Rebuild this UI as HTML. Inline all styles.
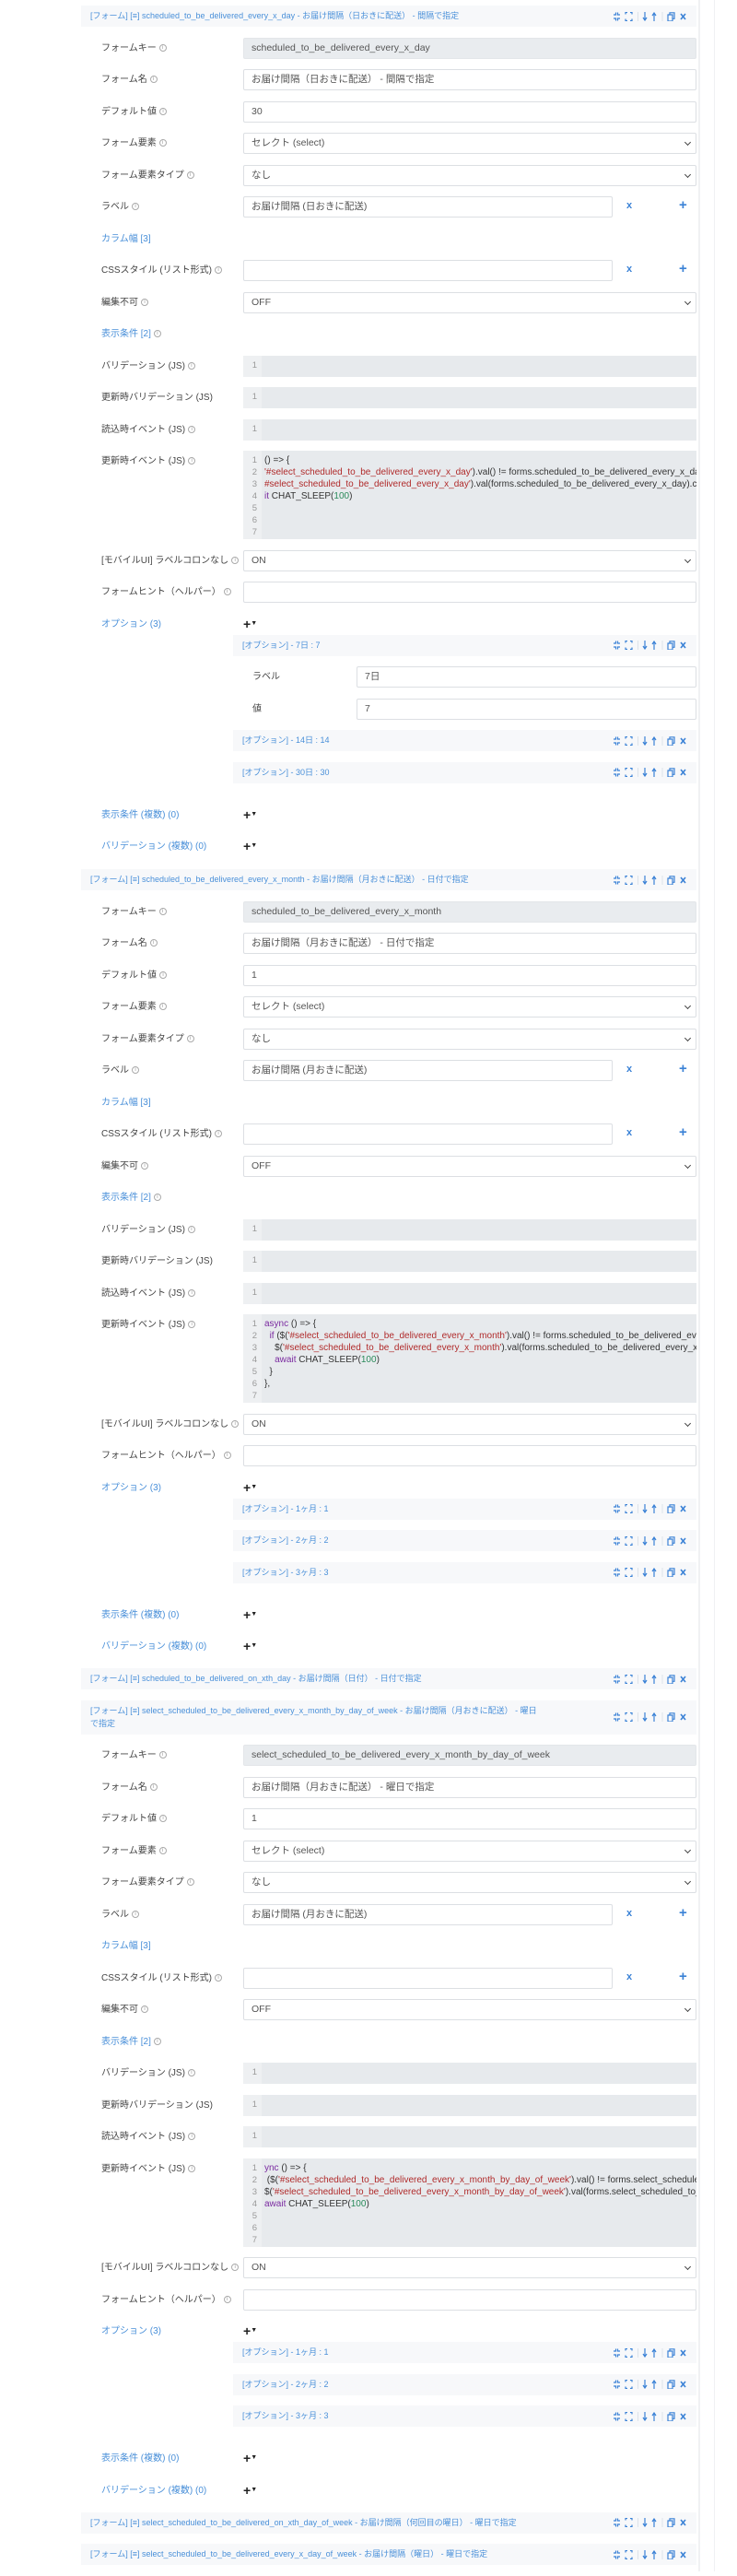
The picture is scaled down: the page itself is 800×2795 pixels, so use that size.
<!DOCTYPE html>
<html><head><meta charset="utf-8">
<style>
*{box-sizing:border-box;margin:0;padding:0}
body{width:800px;height:2790px;background:#fff;font-family:"Liberation Sans","Noto Sans CJK JP",sans-serif;position:relative;overflow:hidden}
.vl1{position:absolute;left:758px;top:0;width:2px;height:2790px;background:#f0f1f3}
.vl2{position:absolute;left:775px;top:0;width:1px;height:2790px;background:#f0f1f3}
#wrap{position:absolute;left:88px;top:6px;width:668px}
.hd{height:23px;background:#f7f8fa;margin-bottom:11.5px;position:relative;color:#4a90d9;font-size:9px;padding-left:10px;line-height:23px;white-space:nowrap}
.hd.two{height:37px;line-height:14px;padding-top:4px;white-space:normal;padding-right:170px}
.ic{position:absolute;right:10px;top:0;height:23px;display:flex;align-items:center;gap:0}
.hd.two .ic{top:7px}
.ic svg{display:block}
.row{height:23px;margin-bottom:11.5px;position:relative}
.lb{position:absolute;left:22px;top:0;line-height:23px;font-size:10px;color:#444;white-space:nowrap}
.lk{color:#4a90d9}
.i{display:inline-block;width:8px;height:8px;border:1px solid #aaa;border-radius:50%;margin-left:3px;vertical-align:middle;font-size:6px;line-height:6px;text-align:center;color:#999}
.in{position:absolute;left:176px;right:0;top:0;height:23px;border:1px solid #dcdfe3;border-radius:2px;padding-left:8px;font-size:10.5px;line-height:21px;color:#555;background:#fff;white-space:nowrap;overflow:hidden}
.in.dis{background:#e9ecef;border-color:#e3e6e9}
.in.sh{right:91px}
.sel::after{content:"";position:absolute;right:6px;top:7px;width:4px;height:4px;border-right:1.5px solid #444;border-bottom:1.5px solid #444;transform:rotate(45deg)}
.x{position:absolute;left:592px;top:4px;color:#3b82d6;font-weight:bold;font-size:11px}
.p{position:absolute;left:649px;top:1px;color:#3b82d6;font-weight:bold;font-size:15px}
.cd{position:absolute;left:176px;right:0;top:0;bottom:0;background:#e7eaed;overflow:hidden}
.gt{position:absolute;left:0;top:0;bottom:0;width:20px;background:#eef0f2;color:#999;font-size:9.5px;text-align:right;padding-right:5px;padding-top:4px;line-height:13px}
.ct{position:absolute;left:23px;top:4px;font-size:10px;line-height:13px;color:#333;white-space:pre}
.k{color:#7a2aa0}.s{color:#b02a2a}.n{color:#2a8a5a}
.pl{position:absolute;left:176px;top:3px;font-size:14px;font-weight:bold;color:#222}
.pl small{font-size:7px;vertical-align:4px}
.ob{margin-left:165px}
.ob .lb{left:21px}
.ob .in{left:134px}
</style></head><body>
<div class="vl1"></div><div class="vl2"></div>
<div id="wrap">

<!-- SECTION 1 -->
<div class="hd">[フォーム] [≡] scheduled_to_be_delivered_every_x_day - お届け間隔（日おきに配送） - 間隔で指定<div class="ic">ICONS</div></div>
<div class="row"><div class="lb">フォームキー<span class="i">i</span></div><div class="in dis">scheduled_to_be_delivered_every_x_day</div></div>
<div class="row"><div class="lb">フォーム名<span class="i">i</span></div><div class="in">お届け間隔（日おきに配送） - 間隔で指定</div></div>
<div class="row"><div class="lb">デフォルト値<span class="i">i</span></div><div class="in">30</div></div>
<div class="row"><div class="lb">フォーム要素<span class="i">i</span></div><div class="in sel">セレクト (select)</div></div>
<div class="row"><div class="lb">フォーム要素タイプ<span class="i">i</span></div><div class="in sel">なし</div></div>
<div class="row"><div class="lb">ラベル<span class="i">i</span></div><div class="in sh">お届け間隔 (日おきに配送)</div><span class="x">x</span><span class="p">+</span></div>
<div class="row"><div class="lb lk">カラム幅 [3]</div></div>
<div class="row"><div class="lb">CSSスタイル (リスト形式)<span class="i">i</span></div><div class="in sh"></div><span class="x">x</span><span class="p">+</span></div>
<div class="row"><div class="lb">編集不可<span class="i">i</span></div><div class="in sel">OFF</div></div>
<div class="row"><div class="lb lk">表示条件 [2]<span class="i">i</span></div></div>
<div class="row"><div class="lb">バリデーション (JS)<span class="i">i</span></div><div class="cd"><div class="gt">1</div></div></div>
<div class="row"><div class="lb">更新時バリデーション (JS)</div><div class="cd"><div class="gt">1</div></div></div>
<div class="row"><div class="lb">読込時イベント (JS)<span class="i">i</span></div><div class="cd"><div class="gt">1</div></div></div>
<div class="row" style="height:96px"><div class="lb">更新時イベント (JS)<span class="i">i</span></div><div class="cd"><div class="gt">1<br>2<br>3<br>4<br>5<br>6<br>7</div><div class="ct" style="left:23px">() =&gt; {
<span class="s">'#select_scheduled_to_be_delivered_every_x_day'</span>).val() != forms.scheduled_to_be_delivered_every_x_day) {
<span class="s">#select_scheduled_to_be_delivered_every_x_day'</span>).val(forms.scheduled_to_be_delivered_every_x_day).change
<span class="k">it</span> CHAT_SLEEP(<span class="n">100</span>)</div></div></div>
<div class="row"><div class="lb">[モバイルUI] ラベルコロンなし<span class="i">i</span></div><div class="in sel">ON</div></div>
<div class="row"><div class="lb">フォームヒント（ヘルパー）<span class="i">i</span></div><div class="in"></div></div>
<div class="row" style="margin-bottom:0"><div class="lb lk">オプション (3)</div><div class="pl">+<small>▼</small></div></div>
<div class="ob">
<div class="hd">[オプション] - 7日 : 7<div class="ic">ICONS</div></div>
<div class="row"><div class="lb">ラベル</div><div class="in">7日</div></div>
<div class="row"><div class="lb">値</div><div class="in">7</div></div>
<div class="hd">[オプション] - 14日 : 14<div class="ic">ICONS</div></div>
<div class="hd" style="margin-bottom:23px">[オプション] - 30日 : 30<div class="ic">ICONS</div></div>
</div>
<div class="row"><div class="lb lk">表示条件 (複数) (0)</div><div class="pl">+<small>▼</small></div></div>
<div class="row" style="margin-bottom:13px"><div class="lb lk">バリデーション (複数) (0)</div><div class="pl">+<small>▼</small></div></div>

<!-- SECTION 2 -->
<div class="hd">[フォーム] [≡] scheduled_to_be_delivered_every_x_month - お届け間隔（月おきに配送） - 日付で指定<div class="ic">ICONS</div></div>
<div class="row"><div class="lb">フォームキー<span class="i">i</span></div><div class="in dis">scheduled_to_be_delivered_every_x_month</div></div>
<div class="row"><div class="lb">フォーム名<span class="i">i</span></div><div class="in">お届け間隔（月おきに配送） - 日付で指定</div></div>
<div class="row"><div class="lb">デフォルト値<span class="i">i</span></div><div class="in">1</div></div>
<div class="row"><div class="lb">フォーム要素<span class="i">i</span></div><div class="in sel">セレクト (select)</div></div>
<div class="row"><div class="lb">フォーム要素タイプ<span class="i">i</span></div><div class="in sel">なし</div></div>
<div class="row"><div class="lb">ラベル<span class="i">i</span></div><div class="in sh">お届け間隔 (月おきに配送)</div><span class="x">x</span><span class="p">+</span></div>
<div class="row"><div class="lb lk">カラム幅 [3]</div></div>
<div class="row"><div class="lb">CSSスタイル (リスト形式)<span class="i">i</span></div><div class="in sh"></div><span class="x">x</span><span class="p">+</span></div>
<div class="row"><div class="lb">編集不可<span class="i">i</span></div><div class="in sel">OFF</div></div>
<div class="row"><div class="lb lk">表示条件 [2]<span class="i">i</span></div></div>
<div class="row"><div class="lb">バリデーション (JS)<span class="i">i</span></div><div class="cd"><div class="gt">1</div></div></div>
<div class="row"><div class="lb">更新時バリデーション (JS)</div><div class="cd"><div class="gt">1</div></div></div>
<div class="row"><div class="lb">読込時イベント (JS)<span class="i">i</span></div><div class="cd"><div class="gt">1</div></div></div>
<div class="row" style="height:96px"><div class="lb">更新時イベント (JS)<span class="i">i</span></div><div class="cd"><div class="gt">1<br>2<br>3<br>4<br>5<br>6<br>7</div><div class="ct"><span class="k">async</span> () =&gt; {
  <span class="k">if</span> ($(<span class="s">'#select_scheduled_to_be_delivered_every_x_month'</span>).val() != forms.scheduled_to_be_delivered_every_x_month) {
    $(<span class="s">'#select_scheduled_to_be_delivered_every_x_month'</span>).val(forms.scheduled_to_be_delivered_every_x_month).change()
    <span class="k">await</span> CHAT_SLEEP(<span class="n">100</span>)
  }
},</div></div></div>
<div class="row"><div class="lb">[モバイルUI] ラベルコロンなし<span class="i">i</span></div><div class="in sel">ON</div></div>
<div class="row"><div class="lb">フォームヒント（ヘルパー）<span class="i">i</span></div><div class="in"></div></div>
<div class="row" style="margin-bottom:0"><div class="lb lk">オプション (3)</div><div class="pl">+<small>▼</small></div></div>
<div class="ob">
<div class="hd">[オプション] - 1ヶ月 : 1<div class="ic">ICONS</div></div>
<div class="hd">[オプション] - 2ヶ月 : 2<div class="ic">ICONS</div></div>
<div class="hd" style="margin-bottom:23px">[オプション] - 3ヶ月 : 3<div class="ic">ICONS</div></div>
</div>
<div class="row"><div class="lb lk">表示条件 (複数) (0)</div><div class="pl">+<small>▼</small></div></div>
<div class="row" style="margin-bottom:12px"><div class="lb lk">バリデーション (複数) (0)</div><div class="pl">+<small>▼</small></div></div>

<!-- SECTION 3 -->
<div class="hd">[フォーム] [≡] scheduled_to_be_delivered_on_xth_day - お届け間隔（日付） - 日付で指定<div class="ic">ICONS</div></div>

<!-- SECTION 4 -->
<div class="hd two">[フォーム] [≡] select_scheduled_to_be_delivered_every_x_month_by_day_of_week - お届け間隔（月おきに配送） - 曜日で指定<div class="ic">ICONS</div></div>
<div class="row"><div class="lb">フォームキー<span class="i">i</span></div><div class="in dis">select_scheduled_to_be_delivered_every_x_month_by_day_of_week</div></div>
<div class="row"><div class="lb">フォーム名<span class="i">i</span></div><div class="in">お届け間隔（月おきに配送） - 曜日で指定</div></div>
<div class="row"><div class="lb">デフォルト値<span class="i">i</span></div><div class="in">1</div></div>
<div class="row"><div class="lb">フォーム要素<span class="i">i</span></div><div class="in sel">セレクト (select)</div></div>
<div class="row"><div class="lb">フォーム要素タイプ<span class="i">i</span></div><div class="in sel">なし</div></div>
<div class="row"><div class="lb">ラベル<span class="i">i</span></div><div class="in sh">お届け間隔 (月おきに配送)</div><span class="x">x</span><span class="p">+</span></div>
<div class="row"><div class="lb lk">カラム幅 [3]</div></div>
<div class="row"><div class="lb">CSSスタイル (リスト形式)<span class="i">i</span></div><div class="in sh"></div><span class="x">x</span><span class="p">+</span></div>
<div class="row"><div class="lb">編集不可<span class="i">i</span></div><div class="in sel">OFF</div></div>
<div class="row"><div class="lb lk">表示条件 [2]<span class="i">i</span></div></div>
<div class="row"><div class="lb">バリデーション (JS)<span class="i">i</span></div><div class="cd"><div class="gt">1</div></div></div>
<div class="row"><div class="lb">更新時バリデーション (JS)</div><div class="cd"><div class="gt">1</div></div></div>
<div class="row"><div class="lb">読込時イベント (JS)<span class="i">i</span></div><div class="cd"><div class="gt">1</div></div></div>
<div class="row" style="height:96px"><div class="lb">更新時イベント (JS)<span class="i">i</span></div><div class="cd"><div class="gt">1<br>2<br>3<br>4<br>5<br>6<br>7</div><div class="ct"><span class="k">ync</span> () =&gt; {
 ($(<span class="s">'#select_scheduled_to_be_delivered_every_x_month_by_day_of_week'</span>).val() != forms.select_scheduled_to_be_delivered
$(<span class="s">'#select_scheduled_to_be_delivered_every_x_month_by_day_of_week'</span>).val(forms.select_scheduled_to_be_delivered
<span class="k">await</span> CHAT_SLEEP(<span class="n">100</span>)</div></div></div>
<div class="row"><div class="lb">[モバイルUI] ラベルコロンなし<span class="i">i</span></div><div class="in sel">ON</div></div>
<div class="row"><div class="lb">フォームヒント（ヘルパー）<span class="i">i</span></div><div class="in"></div></div>
<div class="row" style="margin-bottom:0"><div class="lb lk">オプション (3)</div><div class="pl">+<small>▼</small></div></div>
<div class="ob">
<div class="hd">[オプション] - 1ヶ月 : 1<div class="ic">ICONS</div></div>
<div class="hd">[オプション] - 2ヶ月 : 2<div class="ic">ICONS</div></div>
<div class="hd" style="margin-bottom:23px">[オプション] - 3ヶ月 : 3<div class="ic">ICONS</div></div>
</div>
<div class="row"><div class="lb lk">表示条件 (複数) (0)</div><div class="pl">+<small>▼</small></div></div>
<div class="row" style="margin-bottom:12px"><div class="lb lk">バリデーション (複数) (0)</div><div class="pl">+<small>▼</small></div></div>

<div class="hd">[フォーム] [≡] select_scheduled_to_be_delivered_on_xth_day_of_week - お届け間隔（何回目の曜日） - 曜日で指定<div class="ic">ICONS</div></div>
<div class="hd">[フォーム] [≡] select_scheduled_to_be_delivered_every_x_day_of_week - お届け間隔（曜日） - 曜日で指定<div class="ic">ICONS</div></div>
</div>
<script>
var ic='<svg width="80" height="10" viewBox="0 0 80 10" fill="none" stroke="#3b82d6" stroke-width="1.2"><path d="M0 3h2.5V0.5M4.5 0.5V3H7M0 7h2.5v2.5M4.5 9.5V7H7"/><path d="M13 2.5V0.5h2M18 0.5h2v2M13 7.5v2h2M18 9.5h2v-2"/><line x1="26.5" y1="0" x2="26.5" y2="10" stroke="#dde3ea" stroke-width="1"/><path d="M34 0v8M32 6l2 3 2-3"/><path d="M44 10V2M42 4l2-3 2 3"/><line x1="53" y1="0" x2="53" y2="10" stroke="#dde3ea" stroke-width="1"/><path d="M59 3h5v7h-5zM61 3V0.8h5v6.5h-2"/><path d="M73 2l5 6M78 2l-5 6" stroke-width="1.6"/></svg>';
document.querySelectorAll('.ic').forEach(function(e){e.innerHTML=ic;});
</script>
</body></html>
